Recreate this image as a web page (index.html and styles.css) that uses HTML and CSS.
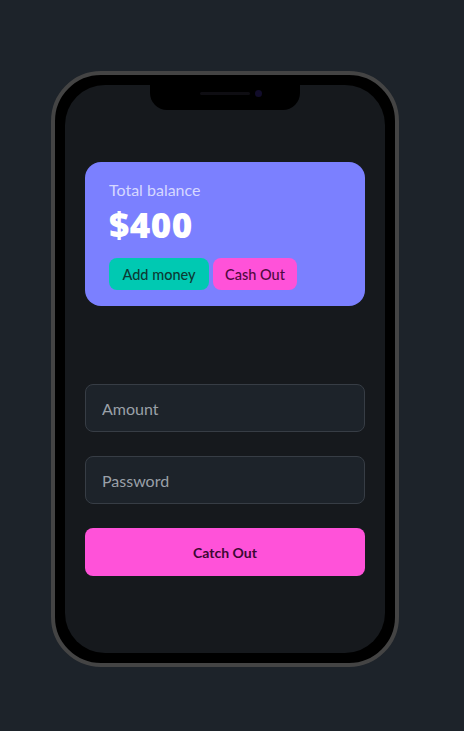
FILE: index.html
```html
<!DOCTYPE html>
<html lang="en">
<head>
<meta charset="utf-8">
<title>Wallet</title>
<link rel="stylesheet" href="styles.css">
</head>
<body>
<div class="phone">
  <div class="screen">
    <div class="notch"><span class="speaker"></span><span class="cam"></span></div>
    <div class="content">
      <div class="card">
        <div class="label">Total balance</div>
        <div class="amount">$400</div>
        <div class="actions">
          <button class="btn btn-teal">Add money</button>
          <button class="btn btn-pink">Cash Out</button>
        </div>
      </div>
      <form class="form">
        <input class="field" type="text" placeholder="Amount">
        <input class="field" type="password" placeholder="Password">
        <button type="button" class="submit">Catch Out</button>
      </form>
    </div>
  </div>
</div>
</body>
</html>
```
FILE: styles.css
```css
html, body {
  margin: 0;
  padding: 0;
  background: #1d232a;
  font-family: Lato, "Open Sans", sans-serif;
}
body {
  padding: 71px 0 0 51px;
  height: 731px;
  box-sizing: border-box;
}
.phone {
  width: 348px;
  height: 596px;
  box-sizing: border-box;
  border: 4px solid #444;
  border-radius: 50px;
  padding: 10px;
  background: #000;
}
.screen {
  width: 320px;
  height: 568px;
  border-radius: 40px;
  overflow: hidden;
  background: #16191d;
}
.notch {
  position: relative;
  width: 150px;
  height: 25px;
  margin: 0 auto;
  background: #000;
  border-radius: 0 0 17px 17px;
}
.speaker {
  position: absolute;
  left: 50px;
  top: 7px;
  width: 50px;
  height: 3px;
  border-radius: 3px;
  background: #0e0d12;
}
.cam {
  position: absolute;
  left: 105px;
  top: 5px;
  width: 7px;
  height: 7px;
  border-radius: 50%;
  background: #110c2a;
}
.content {
  padding: 52px 20px 0;
}
.card {
  background: #7b80ff;
  border-radius: 16px;
  padding: 16px 24px 16px;
  height: 144px;
  box-sizing: border-box;
}
.label {
  font-size: 16px;
  line-height: 24px;
  color: #d6d8ff;
}
.amount {
  font-family: "Open Sans", Lato, sans-serif;
  font-size: 35px;
  line-height: 36px;
  font-weight: 800;
  letter-spacing: 0.5px;
  color: #fff;
  margin-top: 5px;
}
.actions {
  display: flex;
  gap: 4px;
  margin-top: 15px;
}
.btn {
  height: 32px;
  border: none;
  border-radius: 8px;
  padding: 0 12px;
  font-family: inherit;
  font-size: 14.5px;
  font-weight: 500;
}
.btn-teal { background: #00c9b2; color: #0c3a34; width: 100px; }
.btn-pink { background: #ff52d9; color: #4f0a40; width: 84px; }
.form {
  margin: 78px 0 0;
  display: flex;
  flex-direction: column;
  gap: 24px;
}
.field {
  height: 48px;
  box-sizing: border-box;
  border: 1px solid #373d45;
  border-radius: 8px;
  background: #1d232a;
  padding: 0 16px;
  font-family: inherit;
  font-size: 16px;
  color: #a6adbb;
  outline: none;
}
.field::placeholder { color: #9aa0a8; }
.submit {
  height: 48px;
  border: none;
  border-radius: 8px;
  background: #ff52d9;
  color: #3d0833;
  font-family: inherit;
  font-size: 14px;
  font-weight: 700;
}
```
